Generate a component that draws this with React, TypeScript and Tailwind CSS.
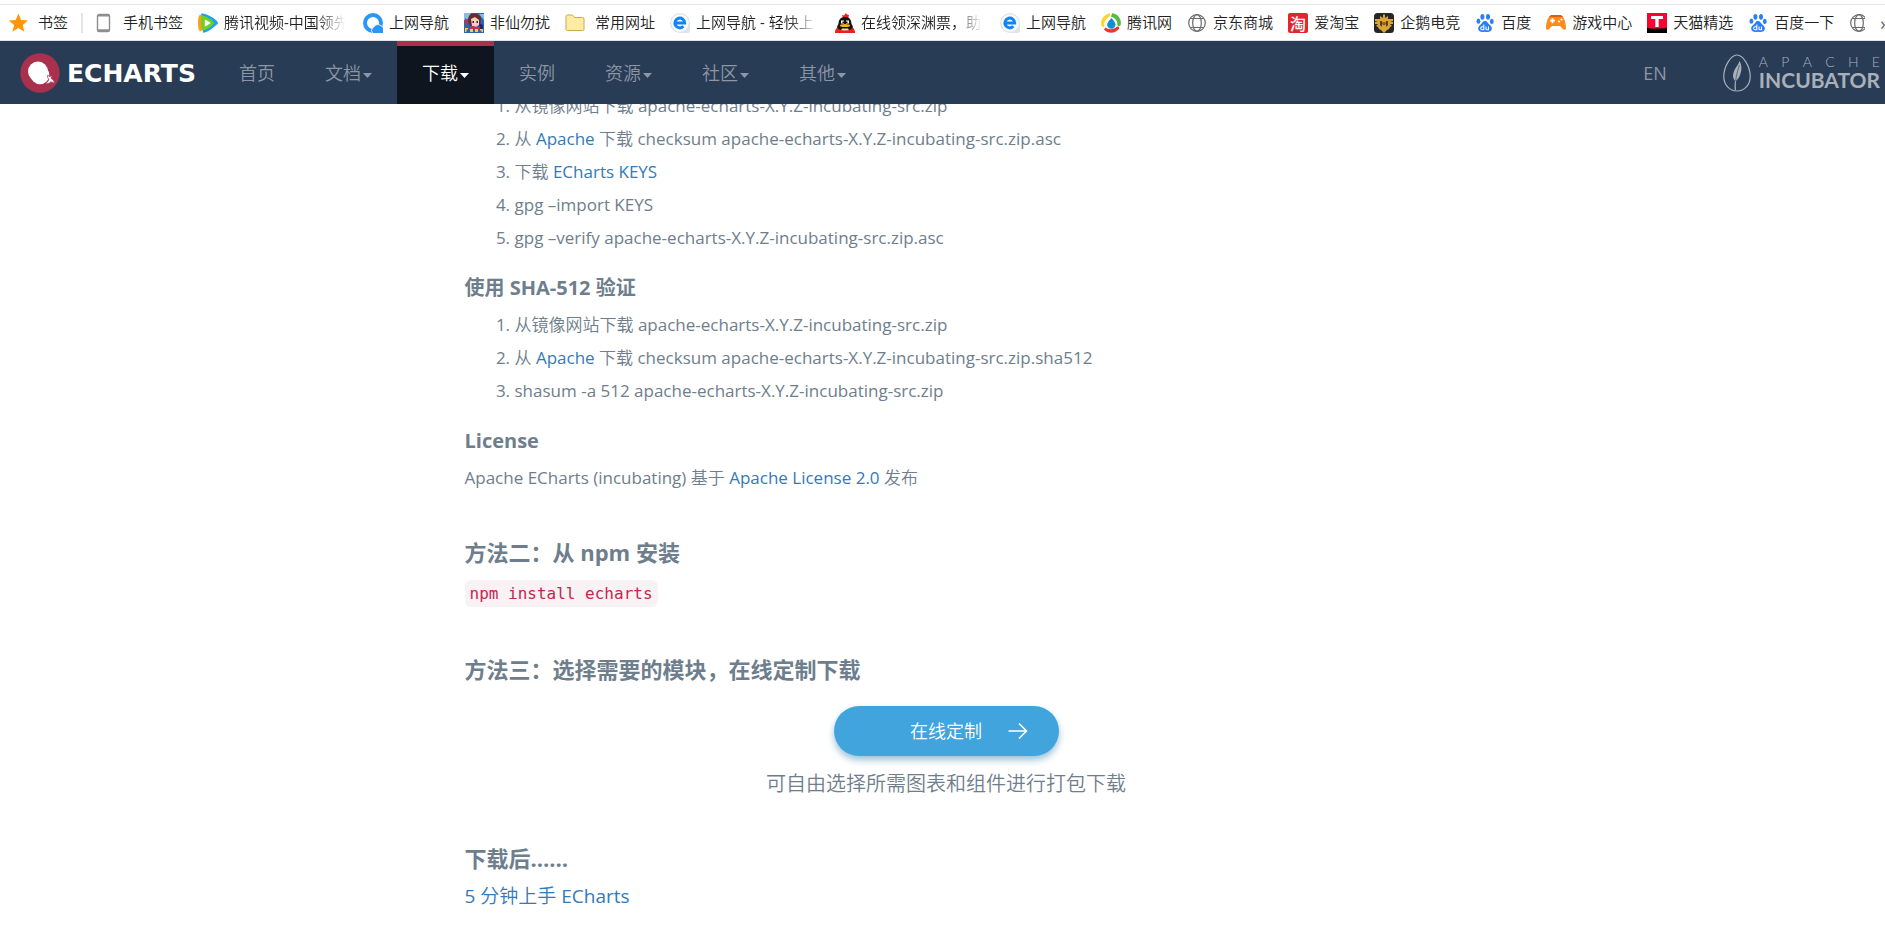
import type { ReactNode } from 'react';

const clean = 'size-5 shrink-0';

function StarIcon() {
  return (
    <svg className={clean} viewBox="0 0 20 20">
      <path fill="#ff9800" d="M10.4.4l2.7 6.500 6.900.5-5.300 4.500 1.700 6.900-6-3.700-6 3.700 1.700-6.900L.8 7.400l6.900-.5z" />
    </svg>
  );
}

function PhoneIcon() {
  return (
    <svg className={clean} viewBox="0 0 20 20" fill="none" stroke="#8e8e8e">
      <rect x="4.500" y="1.500" width="12" height="17" rx="1.500" strokeWidth="1.400" />
      <path d="M5 2.500h11M5 17.200h11" strokeWidth="2" />
    </svg>
  );
}

function VideoIcon() {
  return (
    <svg className={clean} viewBox="0 0 20 20">
      <path fill="#1da1f7" d="M3 .8C7-.6 18 6 19.600 9c.6 1 .2 2-.6 2.600C14 16 9 19.500 5 19.800z" />
      <path fill="#ff9d1c" d="M2 1.500C.4 3 0 6 0 10s.6 7 2 8.500l5-3V4z" />
      <path fill="#6fd01f" d="M3.500 2.500C7 2.500 15 7 16 10c-1.500 3.500-8 7.500-11.500 7.500-1.500-4-2-11-1-15z" />
      <path fill="#fff" d="M6.800 6.200l6 3.800-6 3.800z" />
    </svg>
  );
}

function QNavIcon() {
  return (
    <svg className={clean} viewBox="0 0 20 20">
      <circle cx="10" cy="10" r="8" fill="none" stroke="#2b96f5" strokeWidth="4" />
      <path fill="#2b96f5" stroke="#fff" strokeWidth=".8" d="M10.500 20.500a3.500 3.500 0 0 1 .3-6.400 4.500 4.500 0 0 1 7.200-1.300c3 1.200 3.500 4.500 2.800 7.700z" />
    </svg>
  );
}

function GameAvatarIcon() {
  return (
    <svg className={clean} viewBox="0 0 20 20">
      <rect width="20" height="20" fill="#2f63b5" />
      <path fill="#7fc0ee" d="M0 0h7L3 7H0zM15 1h5v6z" />
      <path fill="#6b2a2c" d="M5 3c3-4 10-3 12 2l-1 8H6L4 8z" />
      <path fill="#f6cfb4" d="M7 6l4-2 4 3v5l-3 2-4-1z" />
      <path fill="#c93048" d="M1 5l3 2-1 5-2-1zM8 13l6 1 3 2H5z" />
      <path fill="#24285e" d="M8.500 8h1.500v2H8.500zM12.500 8H14v2h-1.500zM15 10l4 2v4h-3z" />
      <path fill="#f4d13f" d="M1 15h3v1.500H2.500V19H1zM6 16h3v3H6zM11 16h3v3h-3zM16 16h3v3h-1.500v-1.500H16z" />
    </svg>
  );
}

function FolderIcon() {
  return (
    <svg className={clean} viewBox="0 0 20 20">
      <path fill="#ffeca3" stroke="#cfa84c" d="M1 3.500q0-1.500 1.500-1.500h5l2 2.500h8q1.500 0 1.500 1.500v10.500q0 1-1.500 1h-15q-1.500 0-1.500-1z" />
    </svg>
  );
}

function EIcon() {
  return (
    <svg className={clean} viewBox="0 0 20 20">
      <path fill="#dfe4ea" d="M10 0a10 10 0 1 0 0 20h8q2 0 2-2v-8A10 10 0 0 0 10 0z" />
      <circle cx="10" cy="10" r="8.700" fill="#f8fafc" />
      <path fill="none" stroke="#0f86f5" strokeWidth="3" d="M5 10h9.700a4.900 4.900 0 1 0-1.300 3.300" />
    </svg>
  );
}

function PenguinIcon() {
  return (
    <svg className={clean} viewBox="0 0 20 20">
      <path fill="#e5231b" d="M8 5l-1-3 2 .5L11 0l1 1.500 2 .5-1 4zM0 20c0-4 2-6 5-6h10c3 0 5 2 5 6z" />
      <path fill="#17110f" d="M10 4c5 0 6.500 3.500 6.500 7 1.500 2 2 4 .5 4.500-1.500 2-12.500 2-14 0C1.500 15 2 13 3.500 11c0-3.500 1.500-7 6.500-7z" />
      <path fill="#fff" d="M6 7.500h3v3H6zM11 7.500h3v3h-3z" />
      <path fill="#111" d="M7.500 8.500H9V10H7.500zM11 8.500h1.500V10H11z" />
      <ellipse cx="10" cy="12.500" rx="5" ry="1.500" fill="#f9b218" />
      <path fill="#f6d8c5" d="M7 15.500h6l1 2H6z" />
      <path fill="#e5231b" d="M0 20c0-3 3-3.500 10-2 7-1.500 10-1 10 2z" />
    </svg>
  );
}

function TencentIcon() {
  return (
    <svg className={clean} viewBox="0 0 20 20">
      <circle cx="10" cy="10" r="9.500" fill="#fff" />
      <path fill="#fcd62d" d="M9 .3C3 1-1 7 .4 12.500c.6 1.500 2 2 3 .8C2.600 9 5 5 9.500 3z" />
      <path fill="#57b947" d="M11 .2c6 .3 10 6 8.600 12-1 1.500-2.600 1.200-3.200 0C16.500 8 14.500 5 10 3.800z" />
      <path fill="#e8382d" d="M3 16.500c4 4.500 11 4.500 15-.8.600-1.500-.4-2.600-2-2.200-3 3-8 3.600-11.500 1z" />
      <path fill="#0f8fd2" d="M10.500 5c1.500 2 4 4.500 4 6.500a4.200 4.200 0 0 1-8.400 0c0-2 2.800-4.500 4.400-6.500z" />
    </svg>
  );
}

function GlobeIcon() {
  return (
    <svg className={clean} viewBox="0 0 20 20" fill="none" stroke="#6b6b6b" strokeWidth="1.200">
      <circle cx="10" cy="10" r="8.300" />
      <ellipse cx="10" cy="10" rx="4.300" ry="8.300" />
      <path d="M3.200 5.500h13.600M3.200 14.500h13.600" />
    </svg>
  );
}

function TaobaoIcon() {
  return (
    <span className="flex size-5 shrink-0 items-center justify-center rounded-xs bg-[#e3252e] font-['Noto_Sans_CJK_SC'] text-[16px] leading-none font-medium text-white">淘</span>
  );
}

function EsportsIcon() {
  return (
    <svg className={clean} viewBox="0 0 20 20">
      <rect width="20" height="20" rx="3.500" fill="#262624" />
      <path fill="#dba53c" d="M9 5V2l1-1 1 1v3l3-2v3h5v2l-3 1h3v2h-3l2 2-2 1-1 2-2 1-3 3-3-3-2-1-1-2-2-1 2-2H1V9h3L1 8V6h5V3z" />
      <path fill="#5b3c0d" d="M6 8h2v6l-2-2zM14 8h-2v6l2-2z" />
      <circle cx="10" cy="10.500" r="1.800" fill="#8a5d14" />
    </svg>
  );
}

function BaiduIcon() {
  return (
    <svg className={clean} viewBox="0 0 20 20" fill="#2b7df8">
      <ellipse cx="7.400" cy="3.800" rx="2" ry="2.900" />
      <ellipse cx="13" cy="3.800" rx="2" ry="2.900" />
      <ellipse cx="3.400" cy="8.200" rx="1.900" ry="2.600" />
      <ellipse cx="16.800" cy="8.400" rx="1.900" ry="2.600" />
      <path d="M10 8c2.300 0 2.800 2.200 4.300 3.500 2.200 1.700 3 3 2.400 5-.6 2.200-2.700 2.700-6.700 2.200-4 .5-6 0-6.700-2.200-.5-2 .3-3.300 2.400-5C7.200 10.200 7.700 8 10 8z" />
      <path fill="none" stroke="#fff" strokeWidth="1.100" d="M8.800 11.500v5.300H7.200a1.500 1.500 0 0 1 0-3h1.600M11 13.500v2.500q0 .8 1 .8h1.500v-3.300" />
    </svg>
  );
}

function GamepadIcon() {
  return (
    <svg className={clean} viewBox="0 0 20 20">
      <path fill="#ff8c1a" d="M5.500 2h9C18 3 20 10 20 15c0 2-2.200 2.200-3.200 1L14 13H6l-2.800 3C2.200 17.200 0 17 0 15 0 10 2 3 5.500 2z" />
      <path fill="#e8590c" d="M5.500 2h9c1 .4 1.800 1 2.500 2H3c.7-1 1.500-1.600 2.500-2z" />
      <path stroke="#fff" strokeWidth="1.800" d="M4 7.700h5M6.500 5.200v5" />
      <circle cx="13" cy="8.500" r="1.100" fill="#fff" />
      <circle cx="15.500" cy="6.500" r="1.100" fill="#fff" />
    </svg>
  );
}

function TmallIcon() {
  return (
    <svg className={clean} viewBox="0 0 20 20">
      <rect width="20" height="20" fill="#fb0233" />
      <path fill="#000" d="M0 14.500q2 1.200 5 1h10q3 .2 5-1V20H0z" />
      <path fill="#fff" d="M4 3h12v3h-4.300v8H8.300V6H4z" />
    </svg>
  );
}

type Bookmark = { icon: ReactNode; label: string; faded?: boolean; wide?: boolean };

const bookmarks: Bookmark[] = [
  { icon: <VideoIcon />, label: '腾讯视频-中国领先', faded: true },
  { icon: <QNavIcon />, label: '上网导航' },
  { icon: <GameAvatarIcon />, label: '非仙勿扰' },
  { icon: <FolderIcon />, label: '常用网址', wide: true },
  { icon: <EIcon />, label: '上网导航 - 轻快上', faded: true },
  { icon: <PenguinIcon />, label: '在线领深渊票，助', faded: true },
  { icon: <EIcon />, label: '上网导航' },
  { icon: <TencentIcon />, label: '腾讯网' },
  { icon: <GlobeIcon />, label: '京东商城' },
  { icon: <TaobaoIcon />, label: '爱淘宝' },
  { icon: <EsportsIcon />, label: '企鹅电竞' },
  { icon: <BaiduIcon />, label: '百度' },
  { icon: <GamepadIcon />, label: '游戏中心' },
  { icon: <TmallIcon />, label: '天猫精选' },
  { icon: <BaiduIcon />, label: '百度一下' },
];

function BookmarkLink({ icon, label, faded, wide }: Bookmark) {
  return (
    <a href="#" className={`flex shrink-0 items-center ${wide ? 'gap-2.5' : 'gap-1.5'}`}>
      {icon}
      <span
        className={
          faded
            ? 'w-[124px] [mask-image:linear-gradient(to_right,#000_75%,transparent_98%)]'
            : ''
        }
      >
        {label}
      </span>
    </a>
  );
}

function BookmarkBar() {
  return (
    <div className="pt-1">
      <div className="flex h-[37px] items-center gap-[15px] overflow-hidden border-y border-[#e4e4e4] bg-white pl-2 text-[15px] whitespace-nowrap text-[#222]">
        <a href="#" className="flex shrink-0 items-center gap-2.5">
          <StarIcon />
          书签
        </a>
        <div className="-ml-0.5 flex shrink-0 items-center gap-2.5">
          <span className="h-5 w-0.5 bg-[#e4e4e4]" />
          <a href="#" className="flex items-center gap-2.5">
            <PhoneIcon />
            手机书签
          </a>
        </div>
        {bookmarks.map((b, i) => (
          <BookmarkLink key={i} {...b} />
        ))}
        <a href="#" aria-label="网页" className="w-4 shrink-0 overflow-hidden">
          <GlobeIcon />
        </a>
        <button type="button" className="shrink-0 text-lg leading-none text-[#666]">»</button>
      </div>
    </div>
  );
}

function EChartsLogo() {
  return (
    <a href="#" className="flex items-center gap-[7px]">
      <svg className="size-10" viewBox="0 0 40 40">
        <circle cx="20" cy="20" r="19.700" fill="#aa314d" />
        <circle cx="18" cy="18.500" r="10" fill="#fff" />
        <circle cx="20" cy="22" r="9.300" fill="#fff" />
        <path fill="#fff" stroke="#aa314d" strokeWidth=".8" d="M25 30.500c1.600-.4 3-1.500 3.800-4.300-.9-.5-1.800-2.500-.9-4.200.6 1.200 1.200 1.500 2 1.500.7-.7 1.600-.8 2.200-.2-.8.600-1 1.600-.8 2.300 1.200.2 3 2.100 3.200 5-1-.9-2.300-1.800-3.800-1.700-1 1.500-3.700 2.300-5.700 1.600z" />
      </svg>
      <span className="pt-0.5 font-['DejaVu_Sans'] text-[25px] leading-none font-bold text-white">ECHARTS</span>
    </a>
  );
}

const menu = [
  { label: '首页', caret: false, active: false },
  { label: '文档', caret: true, active: false },
  { label: '下载', caret: true, active: true },
  { label: '实例', caret: false, active: false },
  { label: '资源', caret: true, active: false },
  { label: '社区', caret: true, active: false },
  { label: '其他', caret: true, active: false },
];

function IncubatorLogo() {
  return (
    <a href="#" className="flex items-center gap-2 text-[#a9b0ba]">
      <svg className="h-[38px] w-7" viewBox="0 0 28 38" fill="none">
        <path stroke="currentColor" strokeWidth="1.200" d="M14 1C8 1 .8 12 .8 22.500.8 31 6.500 37 14 37s13.200-6 13.200-14.500C27.200 12 20 1 14 1z" />
        <path fill="currentColor" d="M16.500 7c2.500 4 2.500 9 .5 14-1 3-2.500 4.500-4 6-.3 3-.3 6 0 9h-1.200c-.4-3-.4-6 .2-9-3-4-2-8 0-12 1.500-3 4-5 4.500-8z" />
        <path stroke="#293c55" strokeWidth=".6" d="M16.300 11c-1.500 6-3 10-3.700 16" />
      </svg>
      <span className="flex flex-col">
        <span className="flex justify-between font-['Lato'] text-[14px] leading-[14px] font-light">
          {['A', 'P', 'A', 'C', 'H', 'E'].map((c, i) => (
            <span key={i}>{c}</span>
          ))}
        </span>
        <span className="font-['Lato'] text-[21px] leading-[21px] font-bold">INCUBATOR</span>
      </span>
    </a>
  );
}

function NavBar() {
  return (
    <nav className="relative z-10 flex h-[63px] items-stretch bg-[#293c55] pr-[5px] pl-5 text-[18px] text-[#8c96a4]">
      <EChartsLogo />
      <ul className="ml-[18px] flex">
        {menu.map((m) => (
          <li key={m.label} className="flex">
            <a
              href="#"
              className={
                m.active
                  ? 'flex items-center border-t-[5px] border-[#aa314d] bg-[#0e151f] px-[25px] pb-[3px] text-white'
                  : 'flex items-center px-[25px] pt-0.5'
              }
            >
              {m.label}
              {m.caret && (
                <svg className="mt-1 ml-0.5 h-[5px] w-[9px]" viewBox="0 0 9 5" fill="currentColor">
                  <path d="M0 0h9L4.500 5z" />
                </svg>
              )}
            </a>
          </li>
        ))}
      </ul>
      <div className="ml-auto flex items-center gap-14">
        <a href="#" className="pt-0.5">EN</a>
        <IncubatorLogo />
      </div>
    </nav>
  );
}

function Link({ children }: { children: ReactNode }) {
  return (
    <a href="#" className="text-[#337ab7]">
      {children}
    </a>
  );
}

export default function App() {
  return (
    <div className="min-h-screen overflow-x-hidden bg-white font-['Open_Sans','Noto_Sans_CJK_SC_DemiLight','Noto_Sans_CJK_SC_Light','Noto_Sans_CJK_SC',sans-serif]">
      <BookmarkBar />
      <NavBar />
      <main className="mx-auto -mt-[15px] max-w-[970px] pb-6 pl-[7px] text-[17px] leading-[33px] text-[#6e7e8c]">
        <ol className="list-decimal pl-[50px]">
          <li>从镜像网站下载 apache-echarts-X.Y.Z-incubating-src.zip</li>
          <li>从 <Link>Apache</Link> 下载 checksum apache-echarts-X.Y.Z-incubating-src.zip.asc</li>
          <li>下载 <Link>ECharts KEYS</Link></li>
          <li>gpg –import KEYS</li>
          <li>gpg –verify apache-echarts-X.Y.Z-incubating-src.zip.asc</li>
        </ol>
        <h3 className="mt-3.5 font-['Open_Sans','Noto_Sans_CJK_SC',sans-serif] text-[20px] leading-10 font-bold">使用 SHA-512 验证</h3>
        <ol className="list-decimal pl-[50px]">
          <li>从镜像网站下载 apache-echarts-X.Y.Z-incubating-src.zip</li>
          <li>从 <Link>Apache</Link> 下载 checksum apache-echarts-X.Y.Z-incubating-src.zip.sha512</li>
          <li>shasum -a 512 apache-echarts-X.Y.Z-incubating-src.zip</li>
        </ol>
        <h3 className="mt-3.5 font-['Open_Sans','Noto_Sans_CJK_SC',sans-serif] text-[20px] leading-10 font-bold">License</h3>
        <p>Apache ECharts (incubating) 基于 <Link>Apache License 2.0</Link> 发布</p>

        <h2 className="mt-[38px] font-['Open_Sans','Noto_Sans_CJK_SC',sans-serif] text-[22px] leading-10 font-bold">方法二：从 npm 安装</h2>
        <div className="mt-2 flex">
          <code className="rounded-md bg-[#f9f2f4] px-[5px] font-['DejaVu_Sans_Mono',monospace] text-[16px] leading-[27px] text-[#c7254e]">npm install echarts</code>
        </div>

        <h2 className="mt-[42px] font-['Open_Sans','Noto_Sans_CJK_SC',sans-serif] text-[22px] leading-10 font-bold">方法三：选择需要的模块，在线定制下载</h2>
        <div className="mt-[17px] flex flex-col items-center gap-3">
          <a
            href="#"
            className="grid h-[50px] w-[225px] grid-cols-[1fr_auto_1fr] items-center rounded-full bg-[#41a4dd] text-[18px] text-white shadow-[0_4px_7px_rgba(30,120,170,0.45)]"
          >
            <span className="col-start-2">在线定制</span>
            <svg className="ml-[26px] h-[18px] w-5" viewBox="0 0 20 18" fill="none" stroke="currentColor" strokeWidth="1.500">
              <path d="M.5 9h18M11 1.500L18.500 9 11 16.500" />
            </svg>
          </a>
          <p className="text-[20px] leading-8">可自由选择所需图表和组件进行打包下载</p>
        </div>

        <h2 className="mt-[38px] font-['Open_Sans','Noto_Sans_CJK_SC',sans-serif] text-[22px] leading-10 font-bold">下载后……</h2>
        <p className="mt-0.5 text-[19px]"><Link>5 分钟上手 ECharts</Link></p>
      </main>
    </div>
  );
}
